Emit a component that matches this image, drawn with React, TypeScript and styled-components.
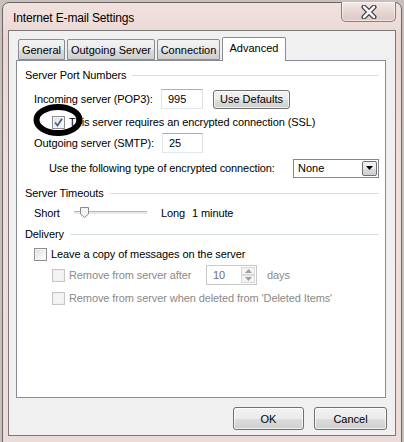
import styled, { createGlobalStyle } from "styled-components";

const GlobalStyle = createGlobalStyle`
  html, body {
    margin: 0;
    padding: 0;
  }
  body {
    width: 404px;
    height: 442px;
    overflow: hidden;
    background: #c9c0be;
    font-family: "Segoe UI", "Liberation Sans", Arial, sans-serif;
    font-size: 11px;
    color: #000;
  }
`;

const Window = styled.div`
  box-sizing: border-box;
  margin: 2px 0 0 2px;
  width: 400px;
  height: 446px;
  border: 1px solid #6b6565;
  border-radius: 7px 7px 0 0;
  background: linear-gradient(180deg, #f1e2df 0%, #ead7d3 8%, #efdfdc 40%, #ecdcd9 100%);
  padding: 0 4px 0 5px;
  display: flex;
  flex-direction: column;
`;

const TitleBar = styled.div`
  height: 27px;
  display: flex;
  align-items: flex-start;
  justify-content: space-between;
`;

const Title = styled.div`
  padding: 8px 0 0 5px;
  font-size: 12px;
  letter-spacing: -0.15px;
  color: #000;
`;

const CloseButton = styled.div`
  box-sizing: border-box;
  width: 55px;
  height: 20px;
  margin: -1px 1px 0 0;
  border: 1px solid #8a7f7e;
  border-top: none;
  border-radius: 0 0 5px 5px;
  background: linear-gradient(180deg, #f3e8e6 0%, #e8d6d3 50%, #dcc8c5 100%);
  box-shadow: inset 0 0 0 1px rgba(255, 255, 255, 0.5);
  display: flex;
  align-items: center;
  justify-content: center;
`;

const Client = styled.div`
  box-sizing: border-box;
  width: 388px;
  height: 406px;
  border: 1px solid #7c7777;
  background: #f0f0f0;
  padding: 5px 0 0 7px;
  display: flex;
  flex-direction: column;
`;

const TabStrip = styled.div`
  display: flex;
  align-items: flex-end;
  height: 24px;
  margin-left: 2px;
  position: relative;
  z-index: 1;
`;

const Tab = styled.div<{ $w: number; $active?: boolean }>`
  box-sizing: border-box;
  width: ${({ $w }) => $w}px;
  height: ${({ $active }) => ($active ? 24 : 21)}px;
  margin-right: ${({ $active }) => ($active ? 0 : 2)}px;
  margin-bottom: ${({ $active }) => ($active ? -1 : 0)}px;
  border: 1px solid #898c95;
  border-bottom: ${({ $active }) => ($active ? "none" : "1px solid #898c95")};
  border-radius: 2px 2px 0 0;
  background: ${({ $active }) =>
    $active ? "#fff" : "linear-gradient(180deg, #f2f2f2 0%, #ebebeb 50%, #dddddd 51%, #cfcfcf 100%)"};
  display: flex;
  align-items: ${({ $active }) => ($active ? "flex-start" : "center")};
  padding-top: ${({ $active }) => ($active ? 4 : 1)}px;
  justify-content: center;
  font-size: 11px;
  white-space: nowrap;
`;

const Panel = styled.div`
  box-sizing: border-box;
  width: 370px;
  height: 338px;
  border: 1px solid #898c95;
  background: #fff;
  display: flex;
  flex-direction: column;
  padding-right: 6px;
`;

const Row = styled.div<{ $h: number; $mt: number; $indent: number }>`
  position: relative;
  display: flex;
  align-items: center;
  height: ${({ $h }) => $h}px;
  margin-top: ${({ $mt }) => $mt}px;
  padding-left: ${({ $indent }) => $indent}px;
  font-size: 11px;
`;

const GroupLine = styled.div`
  flex: 1;
  height: 1px;
  margin-left: 6px;
  background: #d5dfe5;
`;

const Label = styled.span<{ $w?: number; $disabled?: boolean }>`
  display: inline-block;
  width: ${({ $w }) => ($w ? `${$w}px` : "auto")};
  flex-shrink: 0;
  color: ${({ $disabled }) => ($disabled ? "#8a8a8a" : "#000")};
  white-space: nowrap;
  letter-spacing: -0.1px;
`;

const TextBox = styled.div<{ $w: number; $disabled?: boolean }>`
  box-sizing: border-box;
  width: ${({ $w }) => $w}px;
  height: 20px;
  border: 1px solid #abadb3;
  border-left-color: #e2e3ea;
  border-right-color: #dbdfe6;
  border-bottom-color: #e3e9ef;
  background: #fff;
  padding-left: 6px;
  display: flex;
  align-items: center;
  flex-shrink: 0;
  color: ${({ $disabled }) => ($disabled ? "#6d6d6d" : "#000")};
`;

const Button = styled.div<{ $w: number; $h: number }>`
  box-sizing: border-box;
  width: ${({ $w }) => $w}px;
  height: ${({ $h }) => $h}px;
  border: 1px solid #707070;
  border-radius: 3px;
  background: linear-gradient(180deg, #f2f2f2 0%, #ebebeb 50%, #dddddd 51%, #cfcfcf 100%);
  box-shadow: inset 0 0 0 1px rgba(255, 255, 255, 0.7);
  display: flex;
  align-items: center;
  justify-content: center;
  flex-shrink: 0;
  font-size: 11px;
`;

const Select = styled.div`
  box-sizing: border-box;
  width: 86px;
  height: 19px;
  border: 1px solid #828790;
  background: #fff;
  display: flex;
  align-items: center;
  justify-content: space-between;
  padding: 0 1px 0 4px;
  flex-shrink: 0;
`;

const DropButton = styled.div`
  box-sizing: border-box;
  width: 15px;
  height: 15px;
  border: 1px solid #707070;
  border-radius: 2px;
  background: linear-gradient(180deg, #f2f2f2 0%, #ebebeb 50%, #dddddd 51%, #cfcfcf 100%);
  display: flex;
  align-items: center;
  justify-content: center;
`;

const Slider = styled.div`
  position: relative;
  width: 73px;
  height: 14px;
  margin: 0 14px 0 13px;
  flex-shrink: 0;
`;

const Track = styled.div`
  position: absolute;
  left: 0;
  right: 0;
  top: 5px;
  height: 2px;
  border-top: 1px solid #b5b5b5;
  border-bottom: 1px solid #fff;
  background: #e7eaea;
`;

const Thumb = styled.svg`
  position: absolute;
  left: 6px;
  top: 1px;
`;

const Spinner = styled.div`
  box-sizing: border-box;
  width: 51px;
  height: 20px;
  border: 1px solid #c8c8c8;
  background: #fff;
  display: flex;
  align-items: center;
  justify-content: space-between;
  padding: 1px 1px 1px 6px;
  color: #6d6d6d;
  margin-right: 10px;
  flex-shrink: 0;
`;

const SpinButtons = styled.div`
  display: flex;
  flex-direction: column;
  height: 100%;
  width: 14px;
`;

const SpinHalf = styled.div`
  flex: 1;
  box-sizing: border-box;
  border: 1px solid #d9d9d9;
  background: #f4f4f4;
  display: flex;
  align-items: center;
  justify-content: center;
`;

const Box = styled.div<{ $disabled?: boolean }>`
  box-sizing: border-box;
  width: 13px;
  height: 13px;
  border: 1px solid ${({ $disabled }) => ($disabled ? "#c6c6c6" : "#8e8f8f")};
  background: ${({ $disabled }) =>
    $disabled ? "#f4f4f4" : "linear-gradient(135deg, #dcdcdc 0%, #f4f4f4 60%, #fff 100%)"};
  box-shadow: inset 0 0 0 1px ${({ $disabled }) => ($disabled ? "#f0f0f0" : "#f4f4f4")};
  margin-right: 4px;
  flex-shrink: 0;
  display: flex;
  align-items: center;
  justify-content: center;
`;

const Ring = styled.svg`
  position: absolute;
  left: 16px;
  top: -11px;
  pointer-events: none;
`;

const Footer = styled.div`
  width: 371px;
  display: flex;
  justify-content: flex-end;
  gap: 10px;
  margin-top: 9px;
`;

type CheckProps = {
  checked?: boolean;
  disabled?: boolean;
};

const Check = ({ checked, disabled }: CheckProps) => (
  <Box $disabled={disabled}>
    {checked && (
      <svg width="9" height="9" viewBox="0 0 9 9">
        <path d="M1 4.5 L3.5 7.5 L8 0.8" fill="none" stroke="#4a5f97" strokeWidth="1.8" />
      </svg>
    )}
  </Box>
);

const Arrow = ({ up, color }: { up?: boolean; color: string }) => (
  <svg width="7" height="4" viewBox="0 0 7 4">
    <path d={up ? "M0 4 L3.5 0 L7 4 Z" : "M0 0 L7 0 L3.5 4 Z"} fill={color} />
  </svg>
);

const tabs = [
  { label: "General", w: 47 },
  { label: "Outgoing Server", w: 88 },
  { label: "Connection", w: 63 },
];

const App = () => {
  return (
    <>
      <GlobalStyle />
      <Window>
        <TitleBar>
          <Title>Internet E-mail Settings</Title>
          <CloseButton>
            <svg width="16" height="14" viewBox="0 0 16 14">
              <path d="M3 2 L13 12 M13 2 L3 12" stroke="#3b3b3b" strokeWidth="5" strokeLinecap="round" />
              <path d="M3 2 L13 12 M13 2 L3 12" stroke="#f4f4f4" strokeWidth="2.6" strokeLinecap="round" />
            </svg>
          </CloseButton>
        </TitleBar>
        <Client>
          <TabStrip>
            {tabs.map((t) => (
              <Tab key={t.label} $w={t.w}>
                {t.label}
              </Tab>
            ))}
            <Tab $w={64} $active>
              Advanced
            </Tab>
          </TabStrip>
          <Panel>
            <Row $h={16} $mt={6} $indent={8}>
              <Label>Server Port Numbers</Label>
              <GroupLine />
            </Row>
            <Row $h={20} $mt={6} $indent={17}>
              <Label $w={127}>Incoming server (POP3):</Label>
              <TextBox $w={42}>995</TextBox>
              <Button $w={77} $h={19} style={{ marginLeft: 10 }}>
                Use Defaults
              </Button>
            </Row>
            <Row $h={16} $mt={5} $indent={35}>
              <Check checked />
              <Label>This server requires an encrypted connection (SSL)</Label>
              <Ring width="50" height="34" viewBox="0 0 50 34">
                <ellipse cx="25" cy="17" rx="21.5" ry="13" fill="none" stroke="#000" strokeWidth="6" />
              </Ring>
            </Row>
            <Row $h={20} $mt={3} $indent={17}>
              <Label $w={128}>Outgoing server (SMTP):</Label>
              <TextBox $w={41}>25</TextBox>
            </Row>
            <Row $h={20} $mt={5} $indent={32}>
              <Label $w={244}>Use the following type of encrypted connection:</Label>
              <Select>
                <span>None</span>
                <DropButton>
                  <Arrow color="#000" />
                </DropButton>
              </Select>
            </Row>
            <Row $h={16} $mt={7} $indent={8}>
              <Label>Server Timeouts</Label>
              <GroupLine />
            </Row>
            <Row $h={18} $mt={3} $indent={17}>
              <Label $w={27}>Short</Label>
              <Slider>
                <Track />
                <Thumb width="9" height="11" viewBox="0 0 9 11">
                  <path d="M0.5 0.5 H8.5 V7 L4.5 10.5 L0.5 7 Z" fill="#f4f4f4" stroke="#8a8a8a" />
                </Thumb>
              </Slider>
              <Label $w={31}>Long</Label>
              <Label>1 minute</Label>
            </Row>
            <Row $h={16} $mt={4} $indent={8}>
              <Label>Delivery</Label>
              <GroupLine />
            </Row>
            <Row $h={16} $mt={4} $indent={17}>
              <Check />
              <Label>Leave a copy of messages on the server</Label>
            </Row>
            <Row $h={20} $mt={3} $indent={35}>
              <Check disabled />
              <Label $w={137} $disabled>
                Remove from server after
              </Label>
              <Spinner>
                <span>10</span>
                <SpinButtons>
                  <SpinHalf>
                    <Arrow up color="#a0a0a0" />
                  </SpinHalf>
                  <SpinHalf>
                    <Arrow color="#a0a0a0" />
                  </SpinHalf>
                </SpinButtons>
              </Spinner>
              <Label $disabled>days</Label>
            </Row>
            <Row $h={16} $mt={5} $indent={35}>
              <Check disabled />
              <Label $disabled>Remove from server when deleted from 'Deleted Items'</Label>
            </Row>
          </Panel>
          <Footer>
            <Button $w={71} $h={23}>
              OK
            </Button>
            <Button $w={73} $h={23}>
              Cancel
            </Button>
          </Footer>
        </Client>
      </Window>
    </>
  );
};

export default App;
